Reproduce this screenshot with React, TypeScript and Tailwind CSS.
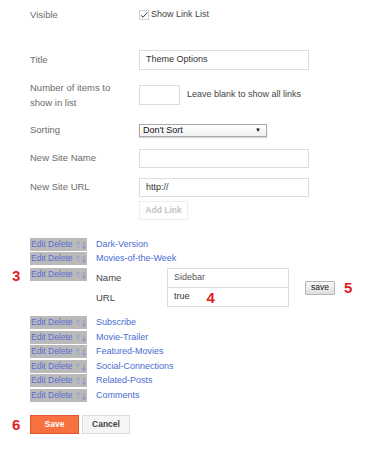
import React from "react";

const links = ["Dark-Version", "Movies-of-the-Week"];
const linksAfter = [
  "Subscribe",
  "Movie-Trailer",
  "Featured-Movies",
  "Social-Connections",
  "Related-Posts",
  "Comments",
];

function Arrow({ up, color }: { up?: boolean; color: string }) {
  return (
    <svg width="4" height="9" viewBox="0 0 4 9" className="shrink-0">
      {up ? (
        <path d="M2 1.5 L0.3 3.8 M2 1.5 L3.7 3.8 M2 1.5 V8" fill="none" stroke={color} strokeWidth="0.9" />
      ) : (
        <path d="M2 8.5 L0.3 6.2 M2 8.5 L3.7 6.2 M2 8.5 V2" fill="none" stroke={color} strokeWidth="0.9" />
      )}
    </svg>
  );
}

function Chip() {
  return (
    <div className="flex h-[13px] w-[57px] shrink-0 items-center overflow-hidden whitespace-nowrap bg-[#bababa] pl-[1px] text-[8.5px] text-[#5a6ed6]">
      <span>Edit Delete</span>
      <span className="ml-[3px] flex items-center gap-[2px]">
        <Arrow up color="#97a2c9" />
        <Arrow color="#7f8fd0" />
      </span>
    </div>
  );
}

function LinkRow({ name }: { name: string }) {
  return (
    <div className="flex h-[14.5px] items-start">
      <div className="w-[18px] shrink-0" />
      <Chip />
      <span className="ml-[9px] text-[9px] leading-[13px] text-[#4a6bd3]">{name}</span>
    </div>
  );
}

function Label({ children }: { children: React.ReactNode }) {
  return <div className="w-[109px] shrink-0 text-[9.5px] text-[#6b6b6b]">{children}</div>;
}

export default function App() {
  return (
    <div
      className="h-[450px] w-[379px] bg-white text-[9px] text-[#333]"
      style={{ fontFamily: '"Liberation Sans", Arial, sans-serif' }}
    >
      <div className="pl-[30px] pt-[8px]">
        {/* Visible */}
        <div className="flex h-[14px] items-center">
          <Label>Visible</Label>
          <span className="flex h-[10px] w-[10px] items-center justify-center border border-[#d0d0d0] bg-white">
            <svg width="9" height="8" viewBox="0 0 9 8">
              <path d="M1 4.2 L3.4 6.6 L8.2 1" fill="none" stroke="#333" strokeWidth="1.1" />
            </svg>
          </span>
          <span className="ml-[2px] text-[#444]">Show Link List</span>
        </div>

        {/* Title */}
        <div className="mt-[28px] flex h-[20px] items-center">
          <Label>Title</Label>
          <div className="flex h-[20px] w-[170px] items-center border border-[#dcdcdc] pl-[6px] text-[#333]">
            Theme Options
          </div>
        </div>

        {/* Number of items */}
        <div className="mt-[15px] flex h-[20px] items-center">
          <Label>
            <div className="leading-[15px]">
              Number of items to
              <br />
              show in list
            </div>
          </Label>
          <div className="h-[20px] w-[41px] border border-[#dcdcdc]" />
          <span className="ml-[7px] text-[#444]">Leave blank to show all links</span>
        </div>

        {/* Sorting */}
        <div className="mt-[19px] flex h-[13px] items-center">
          <Label>Sorting</Label>
          <div className="flex h-[13px] w-[128px] items-center justify-between border border-[#a9a9a9] bg-gradient-to-b from-white to-[#f0f0f0] pl-[3px] pr-[5px] text-[#111] shadow-[0_1px_1px_rgba(0,0,0,0.15)]">
            <span>Don't Sort</span>
            <span className="text-[6px]">▼</span>
          </div>
        </div>

        {/* New Site Name */}
        <div className="mt-[12px] flex h-[19px] items-center">
          <Label>New Site Name</Label>
          <div className="h-[19px] w-[170px] border border-[#dcdcdc]" />
        </div>

        {/* New Site URL */}
        <div className="mt-[10px] flex h-[19px] items-center">
          <Label>New Site URL</Label>
          <div className="flex h-[19px] w-[170px] items-center border border-[#dcdcdc] pl-[6px] text-[#333]">
            http://
          </div>
        </div>

        <div className="mt-[4px] flex">
          <div className="w-[109px]" />
          <div className="flex h-[19px] w-[49px] items-center justify-center border border-[#eeeeee] text-[8.5px] font-bold text-[#c4c4c4]">
            Add Link
          </div>
        </div>
      </div>

      {/* Link list */}
      <div className="mt-[17.5px] pl-[12px]">
        {links.map((l) => (
          <LinkRow key={l} name={l} />
        ))}

        {/* Editing row */}
        <div className="flex h-[49.5px] items-start">
          <div className="w-[18px] shrink-0 pt-[1px] text-[15px] font-bold leading-[15px] text-[#e11d1d]">3</div>
          <div className="mt-[1px]">
            <Chip />
          </div>
          <div className="ml-[9px] mt-[1.5px] flex">
            <div className="flex w-[71px] flex-col text-[9.5px] text-[#444]">
              <div className="flex h-[19.5px] items-center">Name</div>
              <div className="flex h-[19.5px] items-center pt-[2px]">URL</div>
            </div>
            <div className="flex w-[122px] flex-col">
              <div className="flex h-[20px] items-center border border-[#dcdcdc] pl-[6px] text-[#555]">
                Sidebar
              </div>
              <div className="-mt-px flex h-[20px] items-center border border-[#dcdcdc] pl-[6px] text-[#333]">
                <span>true</span>
                <span className="ml-[17px] text-[15px] font-bold leading-none text-[#e11d1d]">4</span>
              </div>
            </div>
            <div className="ml-[16px] mt-[12.5px] flex h-[14px] items-center">
              <div className="flex h-[14px] w-[30px] items-center justify-center rounded-[1px] border border-[#b5b5b5] bg-gradient-to-b from-[#fafafa] to-[#dedede] text-[8.5px] text-[#222]">
                save
              </div>
              <span className="ml-[9px] text-[15px] font-bold leading-none text-[#e11d1d]">5</span>
            </div>
          </div>
        </div>

        {linksAfter.map((l) => (
          <LinkRow key={l} name={l} />
        ))}

        {/* Save / Cancel */}
        <div className="mt-[12px] flex h-[19px] items-center">
          <div className="w-[18px] shrink-0 text-[15px] font-bold leading-none text-[#e11d1d]">6</div>
          <div className="flex h-[19px] w-[49px] items-center justify-center border border-[#e0562b] bg-[#f7703f] text-[8.5px] font-bold text-white">
            Save
          </div>
          <div className="ml-[3px] flex h-[19px] w-[48px] items-center justify-center border border-[#dcdcdc] bg-[#f5f5f5] text-[8.5px] font-bold text-[#444]">
            Cancel
          </div>
        </div>
      </div>
    </div>
  );
}
